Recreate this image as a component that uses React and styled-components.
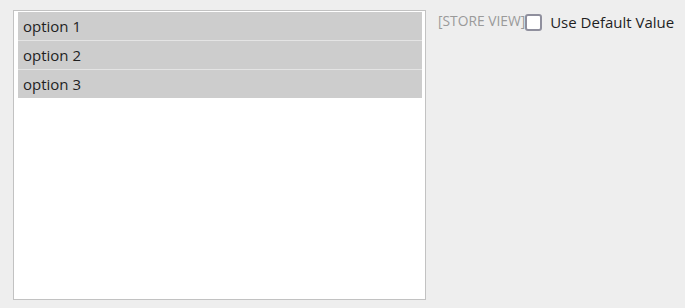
import styled, { createGlobalStyle } from 'styled-components';

const GlobalStyle = createGlobalStyle`
  html, body {
    margin: 0;
    padding: 0;
    background: #eeeeee;
  }
  body {
    font-family: "Open Sans", "Liberation Sans", sans-serif;
    color: #262626;
  }
`;

const Field = styled.div`
  display: flex;
  align-items: flex-start;
  padding: 10px 0 10px 13px;
`;

const MultiSelect = styled.div`
  box-sizing: border-box;
  flex-shrink: 0;
  width: 413px;
  height: 290px;
  background: #fff;
  border: 1px solid #c2c2c2;
  padding: 1px 3px 0 4px;
  display: flex;
  flex-direction: column;
`;

const Option = styled.div`
  height: 28px;
  line-height: 28px;
  padding-left: 5px;
  font-size: 15px;
  color: #1f1f1f;
  background: ${(p) => (p.selected ? '#cdcdcd' : 'transparent')};
  & + & {
    border-top: 1px solid #e4e4e4;
  }
`;

const Side = styled.div`
  display: flex;
  align-items: flex-start;
  margin-left: 12px;
  padding-top: 1px;
  white-space: nowrap;
`;

const ScopeLabel = styled.span`
  font-size: 13.8px;
  color: #9a9a9a;
  line-height: 20px;
`;

const CheckLabel = styled.label`
  display: flex;
  align-items: center;
  gap: 8px;
  font-size: 15px;
  color: #1f1f1f;
  line-height: 22px;
`;

const Box = styled.span`
  box-sizing: border-box;
  flex-shrink: 0;
  width: 17px;
  height: 17px;
  background: #fff;
  border: 2px solid #8f8f9d;
  border-radius: 3px;
`;

const options = ['option 1', 'option 2', 'option 3'];

export default function App() {
  return (
    <>
      <GlobalStyle />
      <Field>
        <MultiSelect>
          {options.map((o) => (
            <Option key={o} selected>
              {o}
            </Option>
          ))}
        </MultiSelect>
        <Side>
          <ScopeLabel>[STORE VIEW]</ScopeLabel>
          <CheckLabel>
            <Box />
            Use Default Value
          </CheckLabel>
        </Side>
      </Field>
    </>
  );
}
